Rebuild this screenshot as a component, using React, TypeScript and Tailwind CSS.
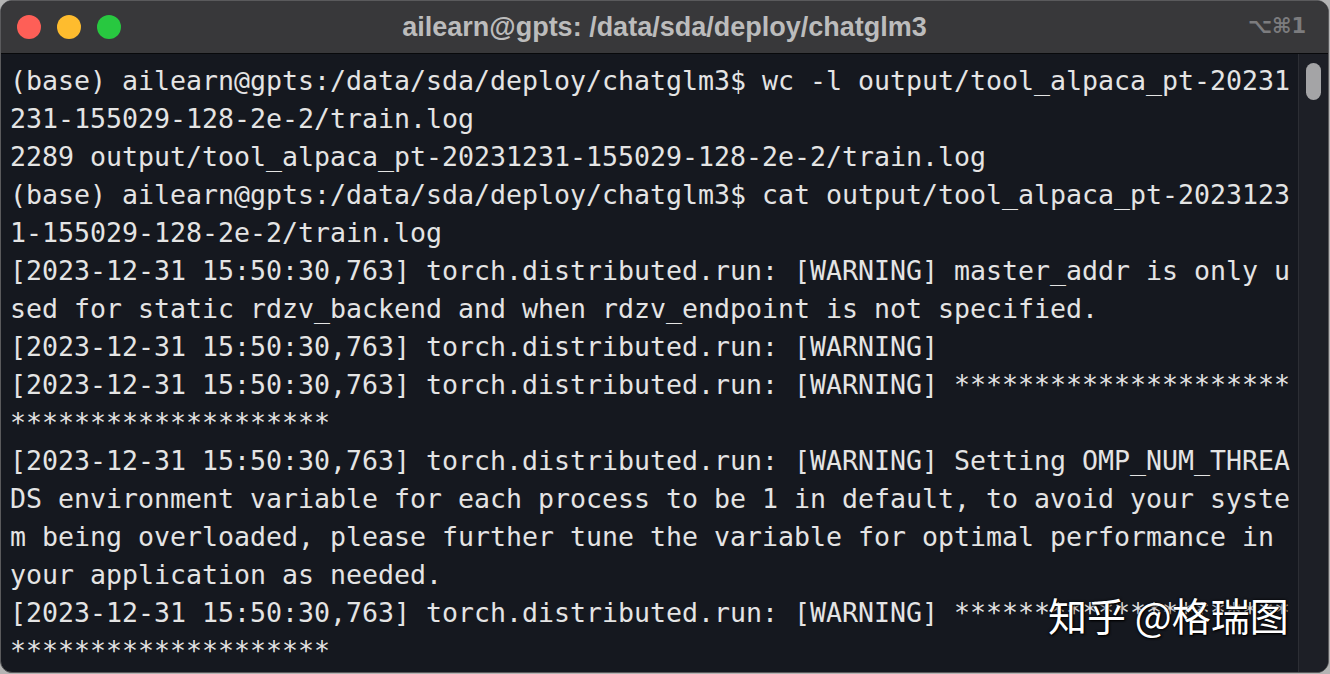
import React from "react";

const lines = [
  "(base) ailearn@gpts:/data/sda/deploy/chatglm3$ wc -l output/tool_alpaca_pt-20231",
  "231-155029-128-2e-2/train.log",
  "2289 output/tool_alpaca_pt-20231231-155029-128-2e-2/train.log",
  "(base) ailearn@gpts:/data/sda/deploy/chatglm3$ cat output/tool_alpaca_pt-2023123",
  "1-155029-128-2e-2/train.log",
  "[2023-12-31 15:50:30,763] torch.distributed.run: [WARNING] master_addr is only u",
  "sed for static rdzv_backend and when rdzv_endpoint is not specified.",
  "[2023-12-31 15:50:30,763] torch.distributed.run: [WARNING] ",
  "[2023-12-31 15:50:30,763] torch.distributed.run: [WARNING] *********************",
  "********************",
  "[2023-12-31 15:50:30,763] torch.distributed.run: [WARNING] Setting OMP_NUM_THREA",
  "DS environment variable for each process to be 1 in default, to avoid your syste",
  "m being overloaded, please further tune the variable for optimal performance in ",
  "your application as needed.",
  "[2023-12-31 15:50:30,763] torch.distributed.run: [WARNING] *********************",
  "********************",
];

function TrafficLights() {
  return (
    <div className="flex items-center gap-[16px] pl-[16px]">
      <span className="block h-[24px] w-[24px] rounded-full bg-[#fe5f57]" />
      <span className="block h-[24px] w-[24px] rounded-full bg-[#febc2e]" />
      <span className="block h-[24px] w-[24px] rounded-full bg-[#28c840]" />
    </div>
  );
}

export default function App() {
  return (
    <div className="h-[674px] w-[1330px] overflow-hidden bg-[#b4b4b4]">
      <div className="relative flex h-[673px] w-[1329px] flex-col overflow-hidden rounded-[12px] border border-[#5a5a5c] bg-[#15181f]">
        {/* title bar */}
        <div className="relative flex h-[53px] shrink-0 items-center border-b border-[#08090b] bg-[#38383a]">
          <TrafficLights />
          <div className="absolute inset-0 flex items-center justify-center font-['Liberation_Sans',Arial,sans-serif] text-[27px] font-bold text-[#bcbcbc]">
            ailearn@gpts: /data/sda/deploy/chatglm3
          </div>
          <div className="ml-auto pr-[22px] font-['DejaVu_Sans',sans-serif] text-[21px] font-bold text-[#7c7c7e]">
            ⌥⌘1
          </div>
        </div>

        {/* body */}
        <div className="flex min-h-0 flex-1">
          <div className="relative flex-1 overflow-hidden pl-[9px] pt-[8px]">
            {lines.map((l, i) => (
              <div
                key={i}
                className="h-[38px] whitespace-pre font-['DejaVu_Sans_Mono',monospace] text-[26.58px] leading-[38px] text-[#e4e4e4]"
              >
                {l}
              </div>
            ))}
            <div className="absolute left-[1047px] top-[537px] font-['Noto_Sans_CJK_SC',sans-serif] text-[39px] leading-[46px] text-white [text-shadow:0_0_3px_#000,1px_1px_2px_#000]">
              知乎 @格瑞图
            </div>
          </div>
          <div className="flex w-[30px] shrink-0 justify-center border-l border-[#2c2e34] bg-[#1d1f26] pt-[9px]">
            <div className="h-[37px] w-[15px] rounded-full bg-[#a4a4a6]" />
          </div>
        </div>
      </div>
    </div>
  );
}
